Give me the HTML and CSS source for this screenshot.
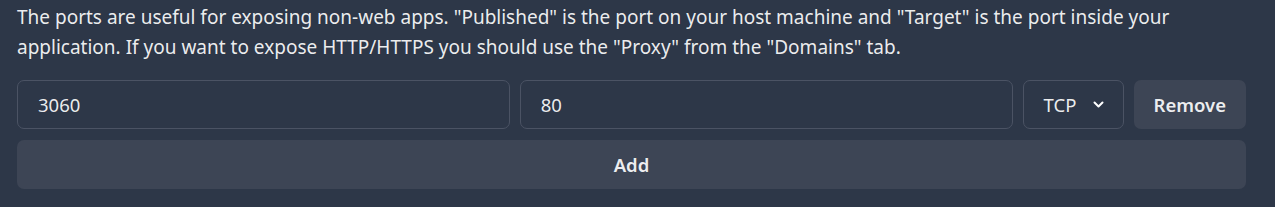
FILE: index.html
```html
<!DOCTYPE html>
<html lang="en">
<head>
    <meta charset="UTF-8">
    <meta name="viewport" content="width=device-width, initial-scale=1.0">
    <title>Ports</title>
    <link rel="stylesheet" href="styles.css">
</head>
<body>
    <div class="ports">
        <p class="hint">The ports are useful for exposing non-web apps. "Published" is the port on your host machine and "Target" is the port inside your application. If you want to expose HTTP/HTTPS you should use the "Proxy" from the "Domains" tab.</p>
        <div class="port-row">
            <input type="text" class="field" value="3060">
            <input type="text" class="field" value="80">
            <div class="select">
                <span>TCP</span>
                <svg width="11" height="7" viewBox="0 0 11 7"><path d="M1.5 1.5l4 4 4-4" fill="none" stroke="#fff" stroke-width="2" stroke-linecap="round" stroke-linejoin="round"/></svg>
            </div>
            <button class="btn">Remove</button>
        </div>
        <button class="btn btn-wide">Add</button>
    </div>
</body>
</html>
```

FILE: styles.css
```css
body {
    margin: 0;
    background: #2d3748;
    font-family: "Noto Sans", "Open Sans", sans-serif;
    color: rgba(255, 255, 255, 0.92);
}
.ports {
    padding: 2px 29px 0 17px;
}
.hint {
    margin: 0 0 18px;
    font-size: 19px;
    line-height: 30px;
}
.port-row {
    display: flex;
    gap: 10px;
    margin-bottom: 11px;
}
.field {
    flex: 1;
    min-width: 0;
    height: 49px;
    box-sizing: border-box;
    padding: 0 20px;
    background: transparent;
    border: 1px solid #4b5364;
    border-radius: 7px;
    color: rgba(255, 255, 255, 0.92);
    font-family: inherit;
    font-size: 18.5px;
}
.select {
    width: 101px;
    height: 49px;
    box-sizing: border-box;
    display: flex;
    align-items: center;
    justify-content: space-between;
    padding: 0 19px 0 20px;
    border: 1px solid #4b5364;
    border-radius: 7px;
    font-size: 18.5px;
}
.btn {
    height: 49px;
    padding: 0 20px;
    border: none;
    border-radius: 7px;
    background: #3d4555;
    color: rgba(255, 255, 255, 0.92);
    font-family: inherit;
    font-size: 18.5px;
    font-weight: 600;
}
.btn-wide {
    display: block;
    width: 100%;
}
```
